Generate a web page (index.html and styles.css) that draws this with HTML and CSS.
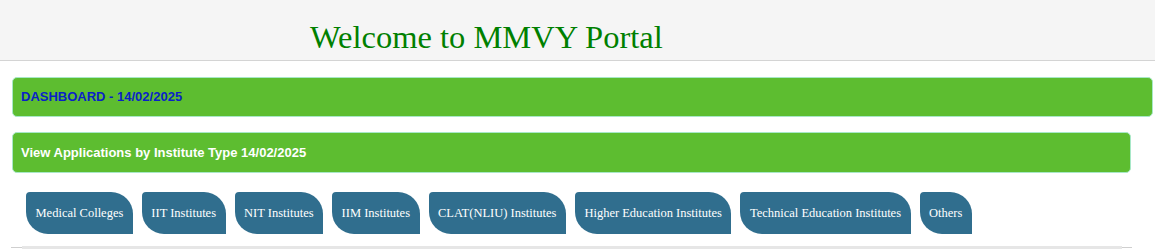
FILE: index.html
```html
<!DOCTYPE html>
<html lang="en">
<head>
  <meta charset="UTF-8">
  <meta name="viewport" content="width=device-width, initial-scale=1.0">
  <title>MMVY Portal</title>
  <link rel="stylesheet" href="styles.css">
</head>
<body>
  <div class="header">
    <h1 class="title">Welcome to MMVY Portal</h1>
  </div>

  <div class="content">
    <div class="bar bar-dashboard">DASHBOARD - 14/02/2025</div>
    <div class="bar bar-view">View Applications by Institute Type 14/02/2025</div>

    <div class="tabs">
      <a class="tab">Medical Colleges</a>
      <a class="tab">IIT Institutes</a>
      <a class="tab">NIT Institutes</a>
      <a class="tab">IIM Institutes</a>
      <a class="tab">CLAT(NLIU) Institutes</a>
      <a class="tab">Higher Education Institutes</a>
      <a class="tab">Technical Education Institutes</a>
      <a class="tab">Others</a>
    </div>

    <div class="panel">
      <div class="panel-head"></div>
    </div>
  </div>
</body>
</html>
```

FILE: styles.css
```css
body {
  margin: 0;
  font-family: 'Liberation Serif', 'Times New Roman', serif;
  background-color: #fff;
}
.header {
  height: 61px;
  background-color: #f5f5f5;
  border-bottom: 1px solid #d4d4d4;
  box-sizing: border-box;
}
.title {
  margin: 0;
  padding: 19px 0 0 310px;
  font-size: 32.5px;
  font-weight: normal;
  line-height: 36px;
  color: #008000;
}
.content {
  padding: 16px 2px 0 12px;
}
.bar {
  height: 40px;
  padding: 0 8px;
  line-height: 38px;
  font-family: 'Liberation Sans', Arial, sans-serif;
  font-size: 13px;
  font-weight: bold;
  background-color: #5dbd30;
  border: 1px solid #a8e8c8;
  border-radius: 5px;
  box-sizing: border-box;
}
.bar-dashboard {
  color: #0a1fc8;
  margin-bottom: 15px;
}
.bar-view {
  color: #fff;
  height: 41px;
  line-height: 39px;
  margin-right: 22px;
}
.tabs {
  display: flex;
  gap: 9px;
  padding: 19px 0 0 14px;
}
.tab {
  height: 42px;
  padding: 0 9.5px;
  line-height: 42px;
  font-size: 12.5px;
  color: #fff;
  background-color: #306e8e;
  border-radius: 4px 22px 0 22px;
  white-space: nowrap;
}
.panel {
  margin: 13px 21px 0 -1px;
  border-top: 1px solid #cfcfcf;
}
.panel-head {
  margin: -2px 10px 0 11px;
  height: 6px;
  background-color: #e6e6e6;
}
```
